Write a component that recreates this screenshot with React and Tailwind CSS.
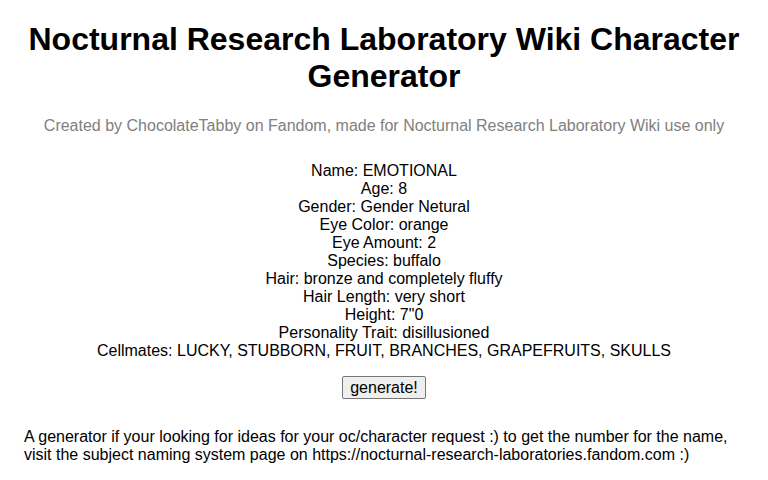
export default function App() {
  const traits = [
    "Name: EMOTIONAL",
    "Age: 8",
    "Gender: Gender Netural",
    "Eye Color: orange",
    "Eye Amount: 2",
    "Species: buffalo",
    "Hair: bronze and completely fluffy",
    "Hair Length: very short",
    'Height: 7"0',
    "Personality Trait: disillusioned",
    "Cellmates: LUCKY, STUBBORN, FRUIT, BRANCHES, GRAPEFRUITS, SKULLS",
  ];
  return (
    <div className="min-h-[480px] bg-white text-black font-['Liberation_Sans',Arial,sans-serif] px-6">
      <h1 className="pt-[21px] text-center text-[32px] leading-[37px] font-bold">
        Nocturnal Research Laboratory Wiki Character Generator
      </h1>
      <p className="mt-[22px] text-center text-[16px] leading-[18px] text-[#808080]">
        Created by ChocolateTabby on Fandom, made for Nocturnal Research Laboratory Wiki use only
      </p>
      <div className="mt-[27px] flex flex-col items-center text-[16px] leading-[18px]">
        {traits.map((t) => (
          <div key={t}>{t}</div>
        ))}
      </div>
      <div className="mt-[16px] flex justify-center">
        <button className="h-[23px] px-[7px] text-[16px] leading-[18px] bg-[#efefef] border border-[#767676] rounded-[2px]">
          generate!
        </button>
      </div>
      <p className="mt-[29px] text-[16px] leading-[18px]">
        A generator if your looking for ideas for your oc/character request :) to get the number for the name, visit the subject naming system page on https://nocturnal-research-laboratories.fandom.com :)
      </p>
    </div>
  );
}
